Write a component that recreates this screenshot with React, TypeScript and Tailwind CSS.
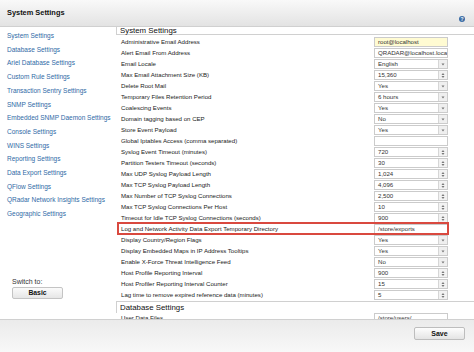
import React from "react";

type Kind = "text" | "select" | "number";
type Row = { label: string; value: string; kind: Kind; yellow?: boolean; highlight?: boolean };

const navItems = [
  "System Settings",
  "Database Settings",
  "Ariel Database Settings",
  "Custom Rule Settings",
  "Transaction Sentry Settings",
  "SNMP Settings",
  "Embedded SNMP Daemon Settings",
  "Console Settings",
  "WINS Settings",
  "Reporting Settings",
  "Data Export Settings",
  "QFlow Settings",
  "QRadar Network Insights Settings",
  "Geographic Settings",
];

const rows: Row[] = [
  { label: "Administrative Email Address", value: "root@localhost", kind: "text", yellow: true },
  { label: "Alert Email From Address", value: "QRADAR@localhost.localdomain", kind: "text" },
  { label: "Email Locale", value: "English", kind: "select" },
  { label: "Max Email Attachment Size (KB)", value: "15,360", kind: "number" },
  { label: "Delete Root Mail", value: "Yes", kind: "select" },
  { label: "Temporary Files Retention Period", value: "6 hours", kind: "select" },
  { label: "Coalescing Events", value: "Yes", kind: "select" },
  { label: "Domain tagging based on CEP", value: "No", kind: "select" },
  { label: "Store Event Payload", value: "Yes", kind: "select" },
  { label: "Global Iptables Access (comma separated)", value: "", kind: "text" },
  { label: "Syslog Event Timeout (minutes)", value: "720", kind: "number" },
  { label: "Partition Testers Timeout (seconds)", value: "30", kind: "number" },
  { label: "Max UDP Syslog Payload Length", value: "1,024", kind: "number" },
  { label: "Max TCP Syslog Payload Length", value: "4,096", kind: "number" },
  { label: "Max Number of TCP Syslog Connections", value: "2,500", kind: "number" },
  { label: "Max TCP Syslog Connections Per Host", value: "10", kind: "number" },
  { label: "Timeout for Idle TCP Syslog Connections (seconds)", value: "900", kind: "number" },
  { label: "Log and Network Activity Data Export Temporary Directory", value: "/store/exports", kind: "text", highlight: true },
  { label: "Display Country/Region Flags", value: "Yes", kind: "select" },
  { label: "Display Embedded Maps in IP Address Tooltips", value: "Yes", kind: "select" },
  { label: "Enable X-Force Threat Intelligence Feed", value: "No", kind: "select" },
  { label: "Host Profile Reporting Interval", value: "900", kind: "number" },
  { label: "Host Profiler Reporting Interval Counter", value: "15", kind: "number" },
  { label: "Lag time to remove expired reference data (minutes)", value: "5", kind: "number" },
];

function Field({ row }: { row: Row }) {
  return (
    <div
      className={`mr-[26px] flex h-[10px] w-[74px] shrink-0 items-stretch overflow-hidden border border-[#cbcbcb] ${
        row.yellow ? "bg-[#fffbd2]" : "bg-white"
      }`}
    >
      <span className="flex flex-1 items-center overflow-hidden whitespace-nowrap pl-[3px] text-[6.1px] leading-none text-[#333]">
        {row.value}
      </span>
      {row.kind === "select" && (
        <span className="flex w-[9px] shrink-0 items-center justify-center border-l border-[#d6d6d6] bg-[#efefef]">
          <svg width="4" height="3" viewBox="0 0 4 3">
            <path d="M0.5 0.5 L3.5 0.5 L2 2.5 Z" fill="#777" />
          </svg>
        </span>
      )}
      {row.kind === "number" && (
        <span className="flex w-[9px] shrink-0 items-center justify-center border-l border-[#d6d6d6] bg-[#f2f2f2]">
          <svg width="4" height="7" viewBox="0 0 4 7">
            <path d="M0.5 3 L2 1 L3.5 3 Z" fill="#777" />
            <path d="M0.5 4 L2 6 L3.5 4 Z" fill="#777" />
          </svg>
        </span>
      )}
    </div>
  );
}

function SettingRow({ row }: { row: Row }) {
  return (
    <div className="relative flex h-[11px] shrink-0 items-start">
      <span className="flex h-[10px] min-w-0 flex-1 items-center overflow-hidden whitespace-nowrap pl-[5px] text-[6.1px] leading-none text-[#222]">
        {row.label}
      </span>
      <Field row={row} />
      {row.highlight && (
        <div className="pointer-events-none absolute bottom-[0px] left-[1px] right-[25px] top-[-2px] border-2 border-[#d9493f]" />
      )}
    </div>
  );
}

export default function App() {
  return (
    <div className="flex h-[352px] w-[474px] flex-col overflow-hidden bg-white font-['Liberation_Sans',Arial,sans-serif] text-[#222]">
      <header className="flex h-[27px] shrink-0 items-start justify-between border-b border-[#d0d0d0] bg-gradient-to-b from-[#f9f9f9] to-[#e3e3e3] pl-[7px] pr-[9px]">
        <h1 className="mt-[8px] text-[7.4px] font-bold leading-[9px] text-[#111]">System Settings</h1>
        <div className="mt-[16px] flex h-[6px] w-[6px] items-center justify-center rounded-full bg-[#3b6ca5] text-[5px] font-bold leading-none text-white">
          ?
        </div>
      </header>

      <div className="flex min-h-0 flex-1">
        <aside className="flex w-[116px] shrink-0 flex-col pb-[20px]">
          <nav className="flex flex-col pl-[7px] pt-[2px]">
            {navItems.map((n) => (
              <a key={n} className="whitespace-nowrap text-[6.5px] leading-[13.7px] text-[#2f6aa6]">
                {n}
              </a>
            ))}
          </nav>
          <div className="mt-auto flex flex-col items-start pl-[12px]">
            <div className="text-[7px] leading-[9px] text-[#333]">Switch to:</div>
            <button className="mt-[1px] flex h-[12px] w-[51px] items-center justify-center rounded-[2px] border border-[#c4c4c4] bg-gradient-to-b from-[#fbfbfb] to-[#e6e6e6] text-[6.8px] font-bold leading-none text-[#111]">
              Basic
            </button>
          </div>
        </aside>

        <main className="flex min-w-0 flex-1 flex-col overflow-hidden">
          <div className="flex h-[8px] shrink-0 items-center border-b border-l border-[#d0d0d0] pl-[3px] text-[7.85px] leading-none text-[#111]">
            System Settings
          </div>
          <div className="mt-[2px] flex flex-col">
            {rows.map((r) => (
              <SettingRow key={r.label} row={r} />
            ))}
          </div>
          <div className="flex h-[12px] shrink-0 items-center border-l border-t border-[#d0d0d0] pl-[3px] text-[7.85px] leading-none text-[#111]">
            Database Settings
          </div>
          <SettingRow row={{ label: "User Data Files", value: "/store/users/", kind: "text" }} />
        </main>
      </div>

      <footer className="flex h-[33px] shrink-0 items-start justify-end border-t border-[#d0d0d0] bg-gradient-to-b from-[#ebebeb] to-[#f8f8f8] pr-[9px] pt-[7px]">
        <button className="flex h-[13px] w-[51px] items-center justify-center rounded-[2px] border border-[#bdbdbd] bg-gradient-to-b from-[#fdfdfd] to-[#e4e4e4] text-[7px] font-bold leading-none text-[#111]">
          Save
        </button>
      </footer>
    </div>
  );
}
